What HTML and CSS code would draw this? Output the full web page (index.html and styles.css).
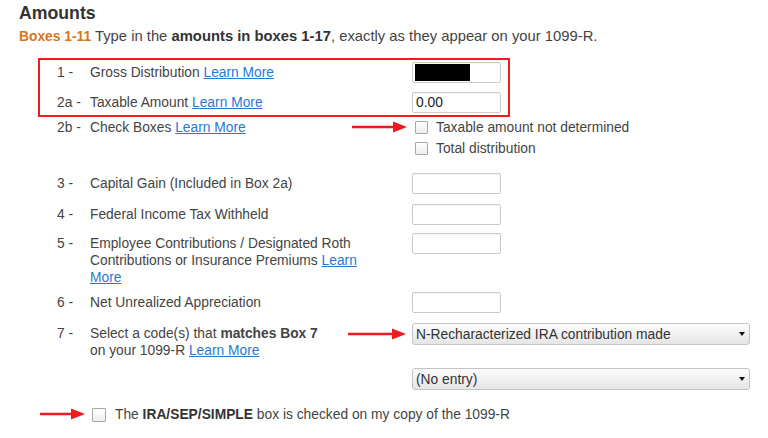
FILE: index.html
```html
<!DOCTYPE html>
<html lang="en">
<head>
<meta charset="utf-8">
<title>Amounts</title>
<link rel="stylesheet" href="styles.css">
</head>
<body>
<div class="page">
  <h1 class="title">Amounts</h1>
  <p class="intro"><span class="boxes">Boxes 1-11</span> Type in the <b>amounts in boxes 1-17</b>, exactly as they appear on your 1099-R.</p>

  <div class="highlight">
    <div class="row">
      <div class="num">1 -</div>
      <div class="label">Gross Distribution <a href="#">Learn More</a></div>
      <div class="control"><div class="field"><span class="redact"></span></div></div>
    </div>
    <div class="row">
      <div class="num">2a -</div>
      <div class="label">Taxable Amount <a href="#">Learn More</a></div>
      <div class="control"><input class="field" type="text" value="0.00"></div>
    </div>
  </div>

  <div class="rows">
    <div class="row row--checks">
      <div class="num">2b -</div>
      <div class="label">Check Boxes <a href="#">Learn More</a></div>
      <div class="control">
        <svg class="arrow arrow--checks" width="55" height="12" viewBox="0 0 55 12"><line x1="0" y1="6" x2="43" y2="6"/><polygon points="41,0.5 55,6 41,11.5"/></svg>
        <label class="check"><input type="checkbox"><span>Taxable amount not determined</span></label>
        <label class="check"><input type="checkbox"><span>Total distribution</span></label>
      </div>
    </div>
    <div class="row row--after-checks">
      <div class="num">3 -</div>
      <div class="label">Capital Gain (Included in Box 2a)</div>
      <div class="control"><input class="field" type="text"></div>
    </div>
    <div class="row">
      <div class="num">4 -</div>
      <div class="label">Federal Income Tax Withheld</div>
      <div class="control"><input class="field" type="text"></div>
    </div>
    <div class="row row--tight">
      <div class="num">5 -</div>
      <div class="label">Employee Contributions / Designated Roth Contributions or Insurance Premiums <a href="#">Learn More</a></div>
      <div class="control"><input class="field" type="text"></div>
    </div>
    <div class="row row--after-tall">
      <div class="num">6 -</div>
      <div class="label">Net Unrealized Appreciation</div>
      <div class="control"><input class="field" type="text"></div>
    </div>
    <div class="row">
      <div class="num">7 -</div>
      <div class="label">Select a code(s) that <b>matches Box 7</b><br>on your 1099-R <a href="#">Learn More</a></div>
      <div class="control control--selects">
        <svg class="arrow arrow--select" width="58" height="12" viewBox="0 0 58 12"><line x1="0" y1="6" x2="46" y2="6"/><polygon points="44,0.5 58,6 44,11.5"/></svg>
        <div class="select">
          <select><option>N-Recharacterized IRA contribution made</option></select>
        </div>
        <div class="select">
          <select><option>(No entry)</option></select>
        </div>
      </div>
    </div>
  </div>

  <label class="ira">
    <svg class="arrow arrow--ira" width="45" height="12" viewBox="0 0 45 12"><line x1="0" y1="6" x2="33" y2="6"/><polygon points="31,0.5 45,6 31,11.5"/></svg>
    <input type="checkbox">
    <span>The <b>IRA/SEP/SIMPLE</b> box is checked on my copy of the 1099-R</span>
  </label>
</div>
</body>
</html>
```

FILE: styles.css
```css
* {
  box-sizing: border-box;
}

body {
  margin: 0;
  background: #ffffff;
  font-family: "Liberation Sans", Arial, sans-serif;
  color: #444444;
}

.page {
  padding: 2px 0 0 19px;
}

.title {
  margin: 0;
  font-size: 17.7px;
  line-height: 22px;
  font-weight: bold;
  color: #333333;
}

.intro {
  margin: 2px 0 0;
  font-size: 14.8px;
  line-height: 20px;
  color: #444444;
}

.intro b {
  color: #333333;
}

.boxes {
  font-weight: bold;
  font-size: 13.8px;
  color: #d5761d;
}

a {
  color: #2b78d4;
  text-decoration: underline;
}

.highlight {
  margin: 11px 0 0 19px;
  width: 472px;
  border: 2px solid #f01b1f;
  padding: 2px 0 2px 17px;
  display: flex;
  flex-direction: column;
  gap: 9px;
}

.rows {
  margin-left: 38px;
  display: flex;
  flex-direction: column;
}

.row {
  display: grid;
  grid-template-columns: 33px 322px auto;
  align-items: start;
  font-size: 13.8px;
}

.rows .row {
  margin-top: 10px;
}

.rows .row--checks {
  margin-top: 0;
}

.rows .row--after-checks {
  margin-top: 14px;
}

.rows .row--tight {
  margin-top: 8px;
}

.rows .row--after-tall {
  margin-top: 6px;
}

.num,
.label {
  line-height: 17px;
  padding-top: 2px;
}

.label {
  padding-right: 32px;
}

.control {
  position: relative;
}

.field {
  display: flex;
  align-items: center;
  width: 89px;
  height: 21px;
  margin: 0;
  padding: 0 3px;
  border: 1px solid #cacaca;
  border-radius: 2px;
  background: #ffffff;
  font-family: "Liberation Sans", Arial, sans-serif;
  font-size: 13.8px;
  color: #222222;
  box-shadow: inset 0 1px 1px rgba(0, 0, 0, 0.04);
}

.redact {
  display: block;
  width: 55px;
  height: 17px;
  margin-left: -1px;
  background: #000000;
}

.check {
  display: flex;
  align-items: center;
  gap: 8px;
  height: 21px;
  padding-left: 3px;
  font-size: 13.8px;
  color: #444444;
}

input[type="checkbox"] {
  appearance: none;
  -webkit-appearance: none;
  width: 13px;
  height: 13px;
  margin: 0;
  border: 1px solid #a8a8a8;
  border-radius: 1px;
  background: linear-gradient(#ffffff, #ededed);
  flex: none;
}

.arrow {
  position: absolute;
}

.arrow line {
  stroke: #ec1b1f;
  stroke-width: 2.6;
}

.arrow polygon {
  fill: #ec1b1f;
}

.arrow--checks {
  left: -60px;
  top: 4px;
}

.arrow--select {
  left: -64px;
  top: 5px;
}

.control--selects {
  display: flex;
  flex-direction: column;
  gap: 23px;
}

.select {
  position: relative;
  width: 338px;
  height: 22px;
}

.select select {
  appearance: none;
  -webkit-appearance: none;
  width: 100%;
  height: 100%;
  margin: 0;
  padding: 0 20px 0 3px;
  border: 1px solid #c4c4c4;
  border-radius: 3px;
  background: linear-gradient(#fdfdfd, #e5e5e5);
  font-family: "Liberation Sans", Arial, sans-serif;
  font-size: 13.8px;
  color: #333333;
}

.select::after {
  content: "";
  position: absolute;
  right: 5px;
  top: 9px;
  border-left: 3px solid transparent;
  border-right: 3px solid transparent;
  border-top: 4px solid #111111;
  pointer-events: none;
}

.ira {
  position: relative;
  display: flex;
  align-items: center;
  gap: 9px;
  height: 21px;
  margin: 14px 0 0 73px;
  font-size: 13.8px;
  color: #444444;
}

.ira b {
  color: #333333;
}

.ira input[type="checkbox"] {
  width: 14px;
  height: 14px;
}

.arrow--ira {
  left: -52px;
  top: 4px;
}
```
